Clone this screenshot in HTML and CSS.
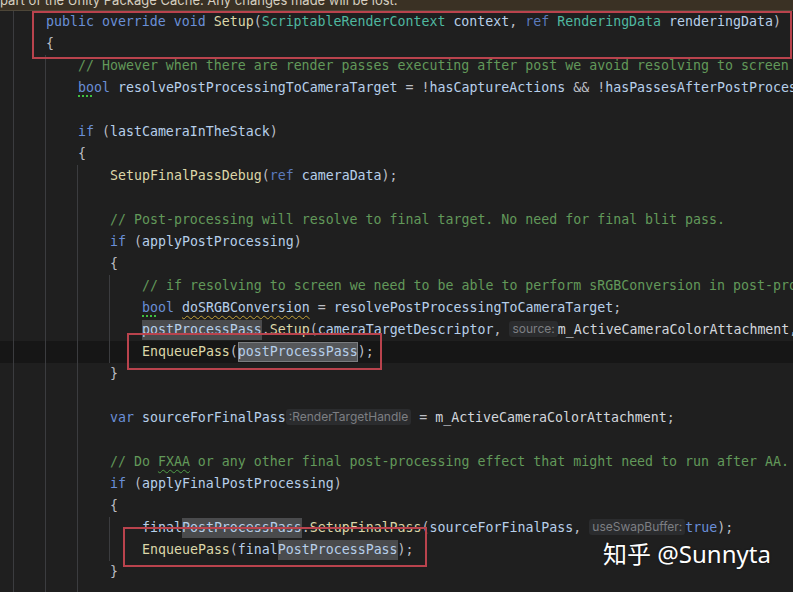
FILE: index.html
```html
<!DOCTYPE html>
<html lang="en">
<head>
    <meta charset="UTF-8">
    <title>RenderingData Setup</title>
    <link rel="stylesheet" href="styles.css">
</head>
<body>
<div class="shot">
    <!-- unity package cache notice -->
    <div class="banner"><span>part of the Unity Package Cache. Any changes made will be lost.</span></div>

    <div class="caret-row"></div>

    <div class="editor">
        <div class="block">
            <div class="ln"><span class="kw">public override void</span> <span class="fn">Setup</span>(<span class="ty">ScriptableRenderContext</span> <span class="id">context</span>, <span class="kw dim">ref</span> <span class="ty">RenderingData</span> <span class="id">renderingData</span>)</div>
            <div class="ln">{</div>
            <div class="block">
                <div class="ln cm">// However when there are render passes executing after post we avoid resolving to screen rendertarget</div>
                <div class="ln"><span class="kw"><span class="dots">bo</span>ol</span> <span class="id">resolvePostProcessingToCameraTarget</span> = !<span class="id">hasCaptureActions</span> &amp;&amp; !<span class="id">hasPassesAfterPostProcessing</span>;</div>
                <div class="ln"></div>
                <div class="ln"><span class="kw">if</span> (<span class="id">lastCameraInTheStack</span>)</div>
                <div class="ln">{</div>
                <div class="block">
                    <div class="ln"><span class="fn">SetupFinalPassDebug</span>(<span class="kw dim">ref</span> <span class="id">cameraData</span>);</div>
                    <div class="ln"></div>
                    <div class="ln cm">// Post-processing will resolve to final target. No need for final blit pass.</div>
                    <div class="ln"><span class="kw">if</span> (<span class="id">applyPostProcessing</span>)</div>
                    <div class="ln">{</div>
                    <div class="block">
                        <div class="ln cm">// if resolving to screen we need to be able to perform sRGBConversion in post-processing if necessary</div>
                        <div class="ln"><span class="kw"><span class="dots">bo</span>ol</span> <span class="id warn">doSRGBConversion</span> = <span class="id">resolvePostProcessingToCameraTarget</span>;</div>
                        <div class="ln"><span class="id hl">postProcessPass</span>.<span class="fn">Setup</span>(<span class="id">cameraTargetDescriptor</span>, <span class="hint">source:</span><span class="fd">m_ActiveCameraColorAttachment</span>, <span class="id">resolvePostProcessingToCameraTarget</span>);</div>
                        <div class="ln"><span class="fn">EnqueuePass</span>(<span class="id hl hl-on">postProcessPass</span>);</div>
                    </div>
                    <div class="ln">}</div>
                    <div class="ln"></div>
                    <div class="ln"><span class="kw">var</span> <span class="id">sourceForFinalPass</span><span class="hint">:RenderTargetHandle</span> = <span class="fd">m_ActiveCameraColorAttachment</span>;</div>
                    <div class="ln"></div>
                    <div class="ln cm">// Do <span class="typo">FXAA</span> or any other final post-processing effect that might need to run after AA.</div>
                    <div class="ln"><span class="kw">if</span> (<span class="id">applyFinalPostProcessing</span>)</div>
                    <div class="ln">{</div>
                    <div class="block">
                        <div class="ln"><span class="id">final<span class="hl">PostProcessPass</span></span>.<span class="fn">SetupFinalPass</span>(<span class="id">sourceForFinalPass</span>, <span class="hint">useSwapBuffer:</span><span class="kw">true</span>);</div>
                        <div class="ln"><span class="fn">EnqueuePass</span>(<span class="id">final<span class="hl">PostProcessPass</span></span>);</div>
                    </div>
                    <div class="ln">}</div>
                    <div class="ln"></div>
                </div>
            </div>
        </div>
    </div>

    <!-- red annotation boxes -->
    <div class="mark mark-setup"></div>
    <div class="mark mark-enqueue"></div>
    <div class="mark mark-final"></div>

    <div class="watermark">知乎 @Sunnyta</div>
</div>
</body>
</html>
```

FILE: styles.css
```css
/* page */
body {
    margin: 0;
    background-color: #1f1f1f;
    overflow: hidden;
}

.shot {
    position: relative;
    isolation: isolate;
    width: 793px;
    height: 592px;
    overflow: hidden;
    background-color: #1f1f1f;
}

/* notice bar at the top */
.banner {
    height: 10px;
    overflow: hidden;
    background-color: #3a3124;
    border-bottom: 1px solid #4d4638;
    font-family: Inter, "Liberation Sans", sans-serif;
    font-size: 13px;
    color: #d6cfc0;
}
.banner span {
    display: block;
    margin-top: -8px;
    line-height: 16px;
}

/* current line */
.caret-row {
    position: absolute;
    z-index: -1;
    left: 0;
    right: 0;
    top: 341px;
    height: 22px;
    background-color: #161616;
}

/* code */
.editor {
    font-family: "DejaVu Sans Mono", "Liberation Mono", monospace;
    font-size: 13.28px;
    color: #bcbec4;
}

.block {
    margin-left: 31px;
    border-left: 1px solid #3b3c3f;
}
.editor > .block {
    margin-left: 13px;
}

.ln {
    height: 22px;
    line-height: 22px;
    padding-left: 32px;
    white-space: pre;
}

.kw { color: #6a8fd8; }
.kw.dim { color: #5b7bbd; }
.ty { color: #4fb8a0; }
.fn { color: #dcd7a9; }
.id { color: #b7cfea; }
.fd { color: #d2d6dc; }
.cm { color: #62995a; }

/* identifier occurrences */
.hl {
    display: inline-block;
    line-height: 20px;
    vertical-align: top;
    margin-top: 1px;
    background-color: #4a4b4d;
}
.hl-on {
    background-color: #55575a;
    box-shadow: inset 0 0 0 1px #7b7d80;
}

/* inlay hints */
.hint {
    display: inline-block;
    padding: 0 3px;
    line-height: 16px;
    border-radius: 3px;
    background-color: #2b2c2e;
    color: #7d7f83;
    font-family: Inter, "Liberation Sans", sans-serif;
    font-size: 12px;
    vertical-align: 1px;
}

/* inspections */
.dots {
    text-decoration: underline dotted #3fbf3f;
    text-decoration-thickness: 2px;
    text-underline-offset: 3px;
}
.warn {
    text-decoration: underline wavy #c3a239;
    text-decoration-thickness: 1px;
    text-underline-offset: 3px;
}
.typo {
    text-decoration: underline wavy #4f9e48;
    text-decoration-thickness: 1px;
    text-underline-offset: 3px;
}

/* red boxes drawn over the shot */
.mark {
    position: absolute;
    border: 2px solid #b9434d;
}
.mark-setup {
    left: 32px;
    top: 11px;
    width: 756px;
    height: 44px;
}
.mark-enqueue {
    left: 127px;
    top: 333px;
    width: 251px;
    height: 33px;
}
.mark-final {
    left: 123px;
    top: 527px;
    width: 300px;
    height: 36px;
}

.watermark {
    position: absolute;
    left: 603px;
    top: 537px;
    font-family: "Noto Sans", "Noto Sans CJK SC", sans-serif;
    font-size: 24px;
    line-height: 34px;
    color: #ffffff;
    text-shadow: 0 0 2px rgba(0, 0, 0, 0.6);
}
```
